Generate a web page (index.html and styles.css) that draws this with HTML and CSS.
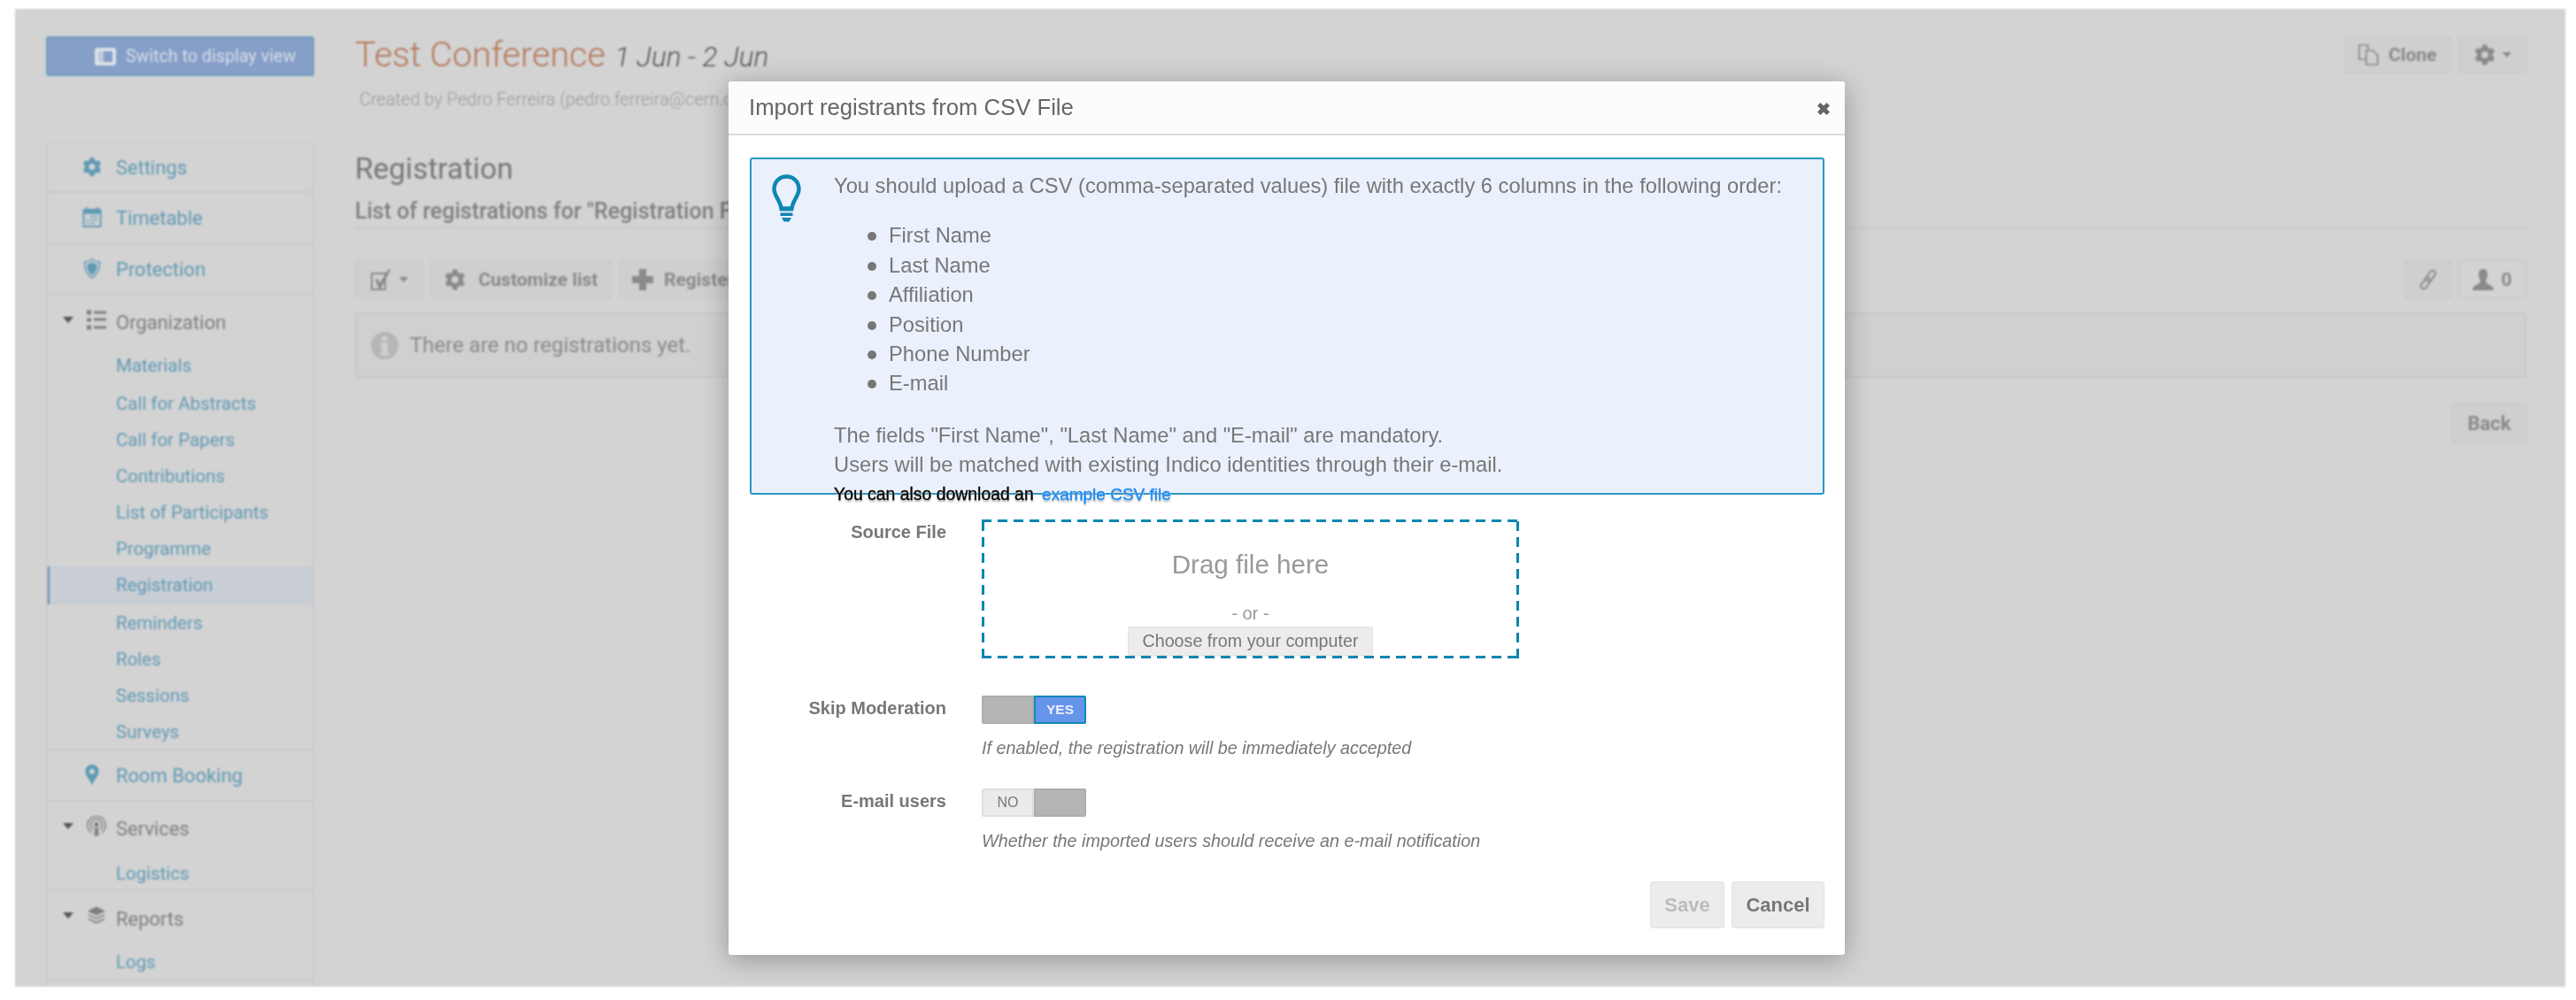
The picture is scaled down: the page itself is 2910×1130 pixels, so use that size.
FILE: index.html
```html
<!DOCTYPE html>
<html lang="en">
<head>
<meta charset="utf-8">
<title>Import registrants from CSV File</title>
<link rel="stylesheet" href="styles.css">
</head>
<body>
<svg class="defs" width="0" height="0" aria-hidden="true">
  <symbol id="cog" viewBox="0 0 24 24">
    <circle cx="12" cy="12" r="6.4" fill="none" stroke="currentColor" stroke-width="5"/>
    <g fill="currentColor">
      <rect x="9.2" y="0.6" width="5.6" height="5" rx="1"/>
      <rect x="9.2" y="0.6" width="5.6" height="5" rx="1" transform="rotate(60 12 12)"/>
      <rect x="9.2" y="0.6" width="5.6" height="5" rx="1" transform="rotate(120 12 12)"/>
      <rect x="9.2" y="0.6" width="5.6" height="5" rx="1" transform="rotate(180 12 12)"/>
      <rect x="9.2" y="0.6" width="5.6" height="5" rx="1" transform="rotate(240 12 12)"/>
      <rect x="9.2" y="0.6" width="5.6" height="5" rx="1" transform="rotate(300 12 12)"/>
    </g>
  </symbol>
  <symbol id="cal" viewBox="0 0 22 24">
    <path fill="currentColor" d="M1 2h3V0h2v2h10V0h2v2h3a1 1 0 0 1 1 1v20a1 1 0 0 1-1 1H1a1 1 0 0 1-1-1V3a1 1 0 0 1 1-1zm1 6v14h18V8z"/>
    <g fill="currentColor"><rect x="9" y="10" width="2" height="2"/><rect x="12" y="10" width="2" height="2"/><rect x="15" y="10" width="2" height="2"/><rect x="5" y="14" width="2" height="2"/><rect x="9" y="14" width="2" height="2"/><rect x="12" y="14" width="2" height="2"/><rect x="15" y="14" width="2" height="2"/><rect x="5" y="18" width="2" height="2"/><rect x="9" y="18" width="2" height="2"/><rect x="12" y="18" width="2" height="2"/></g>
  </symbol>
  <symbol id="shield" viewBox="0 0 20 24">
    <path fill="none" stroke="currentColor" stroke-width="1.6" d="M10 1c2 2 5 3 9 3 0 9-2 15-9 19C3 19 1 13 1 4c4 0 7-1 9-3z"/>
    <path fill="currentColor" d="M10 4.500c1.600 1.300 3.500 2 6 2.200-.2 6-1.600 10-6 13-4.400-3-5.800-7-6-13 2.500-.2 4.400-.9 6-2.200z"/>
  </symbol>
  <symbol id="list" viewBox="0 0 22 22">
    <path fill="currentColor" d="M0 0h5v5H0zM8 1h14v3H8zM0 9h5v4H0zM8 9h14v3H8zM0 17h5v5H0zM8 18h14v3H8z"/>
  </symbol>
  <symbol id="pin" viewBox="0 0 16 24">
    <path fill="currentColor" fill-rule="evenodd" d="M8 0a8 8 0 0 1 8 8c0 5-5 9-8 16C5 17 0 13 0 8a8 8 0 0 1 8-8zm0 5a3 3 0 1 0 0 6 3 3 0 0 0 0-6z"/>
  </symbol>
  <symbol id="cast" viewBox="0 0 24 24">
    <g fill="none" stroke="currentColor" stroke-width="1.600"><path d="M6 20a11 11 0 1 1 12 0"/><path d="M8 16a7 7 0 1 1 8 0"/></g>
    <circle cx="12" cy="10" r="3" fill="currentColor"/><path fill="currentColor" d="M10 14h4l1 10H9z"/>
  </symbol>
  <symbol id="layers" viewBox="0 0 24 24">
    <path fill="currentColor" d="M12 1l11 5.500L12 12 1 6.500zM3 10.500l9 4.500 9-4.500 2 1L12 17 1 11.500zM3 15.500l9 4.500 9-4.500 2 1L12 22 1 16.500z"/>
  </symbol>
  <symbol id="check" viewBox="0 0 24 24">
    <path fill="none" stroke="currentColor" stroke-width="2" d="M1 5h15v18H1z"/>
    <path fill="currentColor" d="M5 12l3-1 2 5L20 0l2 1-11 21h-2z"/>
  </symbol>
  <symbol id="plus" viewBox="0 0 24 24">
    <path fill="currentColor" d="M8 0h8v8h8v8h-8v8H8v-8H0V8h8z"/>
  </symbol>
  <symbol id="user" viewBox="0 0 24 24">
    <path fill="currentColor" d="M12 0c3 0 5 2 5 6s-2 6-2 8c0 3 9 4 9 10H0c0-6 9-7 9-10 0-2-2-4-2-8s2-6 5-6z"/>
  </symbol>
  <symbol id="link" viewBox="0 0 24 24">
    <g fill="none" stroke="currentColor" stroke-width="1.900" transform="rotate(-55 12 12)"><rect x="0" y="8.800" width="14" height="6.400" rx="3.200"/><rect x="10" y="8.800" width="14" height="6.400" rx="3.200"/></g>
  </symbol>
  <symbol id="clone" viewBox="0 0 24 24">
    <g fill="none" stroke="currentColor" stroke-width="1.700"><path d="M1 1h10v16H1z"/><path fill="#cfcfcf" d="M9 7h7l6 5v11H9z"/></g>
  </symbol>
  <symbol id="info" viewBox="0 0 30 30">
    <circle cx="15" cy="15" r="15" fill="currentColor"/>
    <circle cx="15" cy="7.500" r="3" fill="#d0d0d0"/>
    <path fill="#d0d0d0" d="M10 12h8v11h2v3H10v-3h2v-8h-2z"/>
  </symbol>
  <symbol id="panel" viewBox="0 0 24 20">
    <path fill="currentColor" fill-rule="evenodd" d="M3 0h18a3 3 0 0 1 3 3v14a3 3 0 0 1-3 3H3a3 3 0 0 1-3-3V3a3 3 0 0 1 3-3zm1 4v12h16V4z"/>
    <path fill="currentColor" opacity=".65" d="M4 4h6v12H4z"/>
  </symbol>
  <symbol id="bulb" viewBox="0 0 33 54">
    <path fill="none" stroke="currentColor" stroke-width="4.500" d="M16.500 2.500C8 2.500 2.500 9 2.500 16.500c0 8 7 13 8 22h12c1-9 8-14 8-22 0-7.500-5.500-14-14-14z"/>
    <path fill="currentColor" d="M9 38h15v3.500H9zM9.500 43.500h14V47h-14zM11 49h11l-2.500 4.500h-6z"/>
  </symbol>
  <symbol id="close" viewBox="0 0 16 16">
    <path fill="currentColor" d="M4 0l4 4 4-4 4 4-4 4 4 4-4 4-4-4-4 4-4-4 4-4-4-4z"/>
  </symbol>
</svg>

<div class="page">
  <aside class="side">
    <a class="switch"><svg class="i-panel"><use href="#panel"/></svg>Switch to display view</a>
    <nav class="menu">
      <div class="row r-first"><svg class="ico"><use href="#cog"/></svg>Settings</div>
      <div class="row"><svg class="ico"><use href="#cal"/></svg>Timetable</div>
      <div class="row"><svg class="ico"><use href="#shield"/></svg>Protection</div>
      <section class="group">
        <div class="ghead"><span class="caret"></span><svg class="gico"><use href="#list"/></svg>Organization</div>
        <div class="item first">Materials</div>
        <div class="item">Call for Abstracts</div>
        <div class="item">Call for Papers</div>
        <div class="item">Contributions</div>
        <div class="item">List of Participants</div>
        <div class="item">Programme</div>
        <div class="item active">Registration</div>
        <div class="item">Reminders</div>
        <div class="item">Roles</div>
        <div class="item">Sessions</div>
        <div class="item last">Surveys</div>
      </section>
      <div class="row"><svg class="ico"><use href="#pin"/></svg>Room Booking</div>
      <section class="group">
        <div class="ghead"><span class="caret"></span><svg class="gico"><use href="#cast"/></svg>Services</div>
        <div class="item g-one">Logistics</div>
      </section>
      <section class="group">
        <div class="ghead g-low"><span class="caret"></span><svg class="gico"><use href="#layers"/></svg>Reports</div>
        <div class="item g-one g-tail">Logs</div>
      </section>
      <div class="row"></div>
    </nav>
  </aside>

  <main class="main">
    <header class="head">
      <div>
        <h1 class="title">Test Conference <em class="date">1 Jun - 2 Jun</em></h1>
        <p class="created">Created by Pedro Ferreira (pedro.ferreira@cern.ch)</p>
      </div>
      <div class="actions">
        <button class="btn b-clone"><svg class="bi"><use href="#clone"/></svg>Clone</button>
        <button class="btn b-gear"><svg class="bi"><use href="#cog"/></svg><span class="mini"></span></button>
      </div>
    </header>
    <h2 class="h-reg">Registration</h2>
    <h3 class="h-sub">List of registrations for "Registration Form"</h3>
    <div class="toolbar">
      <button class="btn b-check"><svg class="bi"><use href="#check"/></svg><span class="mini"></span></button>
      <button class="btn b-cust"><svg class="bi"><use href="#cog"/></svg>Customize list</button>
      <button class="btn b-reg"><svg class="bi"><use href="#plus"/></svg>Register</button>
      <span class="spacer"></span>
      <button class="btn b-link"><svg class="bi"><use href="#link"/></svg></button>
      <button class="btn b-user"><svg class="bi"><use href="#user"/></svg>0</button>
    </div>
    <div class="notice"><svg class="i-info"><use href="#info"/></svg>There are no registrations yet.</div>
    <div class="back-row"><button class="btn b-back">Back</button></div>
  </main>
</div>

<div class="modal">
  <div class="m-head">
    <span class="m-title">Import registrants from CSV File</span>
    <svg class="m-close"><use href="#close"/></svg>
  </div>
  <div class="m-body">
    <div class="tip">
      <svg class="i-bulb"><use href="#bulb"/></svg>
      <div class="tip-text">
        <p>You should upload a CSV (comma-separated values) file with exactly 6 columns in the following order:</p>
        <ul>
          <li>First Name</li>
          <li>Last Name</li>
          <li>Affiliation</li>
          <li>Position</li>
          <li>Phone Number</li>
          <li>E-mail</li>
        </ul>
        <p>The fields "First Name", "Last Name" and "E-mail" are mandatory.<br>Users will be matched with existing Indico identities through their e-mail.</p>
        <p class="overflow">You can also download an <a>example CSV file</a></p>
      </div>
    </div>
    <div class="form">
      <label class="lab">Source File</label>
      <div class="drop">
        <div class="drag">Drag file here</div>
        <div class="or">- or -</div>
        <button class="choose">Choose from your computer</button>
      </div>
      <label class="lab l-skip">Skip Moderation</label>
      <div class="field f-skip">
        <div class="toggle"><span class="t-off"></span><span class="t-yes">YES</span></div>
        <div class="help">If enabled, the registration will be immediately accepted</div>
      </div>
      <label class="lab l-mail">E-mail users</label>
      <div class="field f-mail">
        <div class="toggle"><span class="t-no">NO</span><span class="t-off t-right"></span></div>
        <div class="help">Whether the imported users should receive an e-mail notification</div>
      </div>
    </div>
    <div class="m-foot">
      <button class="mbtn save">Save</button>
      <button class="mbtn">Cancel</button>
    </div>
  </div>
</div>
</body>
</html>
```
FILE: styles.css
```css
* { box-sizing: border-box; }
html, body { margin: 0; height: 1130px; overflow: hidden; background: #fff; }
body { font-family: "Liberation Sans", Arial, sans-serif; position: relative; }
.defs { position: absolute; }
p, h1, h2, h3, ul { margin: 0; padding: 0; }
button { font-family: inherit; margin: 0; }

.page {
  margin: 10px 12px 0 17px;
  height: 1105px;
  background: #d3d3d3;
  padding: 31px 44px 0 35px;
  display: flex;
  gap: 46px;
  overflow: hidden;
  font-family: Roboto, sans-serif;
  filter: blur(.8px);
}

/* Sidebar */
.side { width: 303px; flex: none; }
.switch {
  display: flex; align-items: center;
  height: 45px; padding-left: 53px;
  background: #859fc9; border: 2px solid #6f9fbb; border-radius: 3px;
  color: #d9dee7; font-size: 19.7px; white-space: nowrap;
}
.i-panel { width: 24px; height: 20px; margin-right: 11px; color: #dde1e8; }
.menu {
  margin-top: 74px; border: 2px solid #cacaca; border-top-width: 1px; border-bottom: 0; border-radius: 3px;
  color: #5f9ab5; font-size: 22px;
}
.row {
  display: flex; align-items: center;
  height: 58px; padding: 1px 0 0 77px; position: relative;
  border-bottom: 2px solid #cacaca;
}
.r-first { height: 57px; }
.ico { position: absolute; left: 39px; top: 16px; width: 22px; height: 23px; }
.group { border-bottom: 2px solid #cacaca; }
.ghead {
  display: flex; align-items: center; height: 58px; padding: 2px 0 0 77px;
  position: relative; color: #7f7f7f;
}
.g-low { padding-top: 4px; }
.caret {
  position: absolute; left: 17px; top: 24px;
  border: 6px solid transparent; border-top: 7px solid #555; border-bottom: 0;
}
.gico { position: absolute; left: 44px; top: 16px; width: 22px; height: 23px; }
.item {
  height: 41px; line-height: 42px; padding-left: 77px; font-size: 20.5px;
}
.item.first { height: 43px; }
.item.last { height: 40px; }
.item.active {
  height: 43px; line-height: 43px; padding-left: 75px;
  background: #c9ced5; border-left: 2px solid #5b8fb3;
}
.item.g-one { line-height: 46px; }
.item.g-tail { line-height: 44px; }

/* Main */
.main { flex: 1; min-width: 0; }
.head { display: flex; justify-content: space-between; height: 129px; }
.title { font-weight: 300; font-size: 39.5px; line-height: 42px; color: #b4785a; white-space: nowrap; }
.date { font-size: 31.5px; color: #555; font-weight: 300; margin-left: 1px; }
.created { margin: 14px 0 0 5px; font-size: 20px; line-height: 24px; color: #999; font-weight: 300; white-space: nowrap; }
.actions { display: flex; gap: 8px; height: 42px; }
.btn {
  display: inline-flex; align-items: center; justify-content: center;
  border: 1px solid #c8c8c8; border-radius: 2px; background: #cfcfcf;
  color: #8a8a8a; font-weight: bold; font-size: 21px; padding: 0; white-space: nowrap;
}
.bi { width: 24px; height: 24px; flex: none; }
.b-clone { width: 121px; gap: 10px; }
.b-gear { width: 77px; gap: 8px; }
.mini { border: 5px solid transparent; border-top: 6px solid #8a8a8a; border-bottom: 0; }
.h-reg { font-weight: 400; font-size: 33.4px; line-height: 40px; color: #777; padding-top: 1px; }
.h-sub {
  margin-top: 13px; height: 34px; line-height: 30px;
  font-weight: 500; font-size: 25px; color: #808080;
  border-bottom: 2px solid #cacaca; white-space: nowrap;
}
.toolbar { display: flex; gap: 8px; height: 43px; margin-top: 36px; }
.spacer { flex: 1; }
.b-check { width: 77px; gap: 8px; }
.b-cust { width: 205px; gap: 15px; }
.b-reg { width: 180px; gap: 12px; justify-content: flex-start; padding-left: 14px; }
.b-link { width: 52px; }
.b-user { width: 77px; gap: 8px; background: #d3d3d3; }
.notice {
  margin-top: 16px; height: 74px; display: flex; align-items: center; padding-left: 16px;
  border: 2px solid #c8c8c8; border-radius: 3px; background: #d0d0d0;
  font-size: 24px; color: #8a8a8a; font-weight: 400;
}
.i-info { width: 31px; height: 31px; margin-right: 13px; color: #b6b6b6; }
.back-row { display: flex; justify-content: flex-end; margin-top: 28px; }
.b-back { width: 84px; height: 46px; font-size: 22px; }

/* Modal */
.modal {
  position: absolute; left: 823px; top: 92px; width: 1261px; height: 987px;
  background: #fff; border-radius: 3px;
  box-shadow: 0 5px 30px rgba(0, 0, 0, .3);
  color: #777;
  filter: blur(.5px);
}
.m-head {
  height: 61px; background: #fcfcfc; border-bottom: 2px solid #dcdcdc;
  border-radius: 3px 3px 0 0; display: flex; align-items: center; justify-content: space-between;
  padding: 0 17px 0 23px;
}
.m-title { font-size: 25.7px; color: #666; }
.m-close { width: 14px; height: 14px; color: #666; margin-top: 2px; }
.m-body { padding: 25px 23px 0 24px; }
.tip {
  height: 381px; border: 2px solid #2a97c2; border-radius: 3px; background: #eaf1fc;
  display: flex; padding: 14px 0 0 23px; font-size: 23.72px; line-height: 33.4px;
}
.i-bulb { width: 33px; height: 54px; flex: none; color: #0f86b3; margin: 3px 37px 0 0; }
.tip-text { min-width: 0; white-space: nowrap; }
.tip ul { list-style: none; margin: 23px 0 25px 62px; }
.tip li { position: relative; }
.tip li::before {
  content: ""; position: absolute; left: -24px; top: 12px;
  width: 10px; height: 10px; border-radius: 50%; background: #777;
}
.overflow {
  font-size: 19.4px; color: #000; margin-top: -1px;
  -webkit-text-stroke: .35px currentColor;
  text-shadow: 0 0 2px #fff, 0 0 1px #fff, 0 2px 2px #999;
}
.overflow a { color: #1587f5; font-size: 19px; margin-left: 4px; }
.form {
  display: grid; grid-template-columns: 222px 1fr; column-gap: 40px;
  margin-top: 28px;
}
.lab { text-align: right; font-weight: bold; font-size: 20px; line-height: 28px; color: #777; }
.drop {
  width: 607px; height: 157px; text-align: center; padding-top: 30px;
  --dash: #0a85b0;
  background:
    repeating-linear-gradient(90deg, var(--dash) 0 11px, transparent 11px 18px) left top / 100% 3px no-repeat,
    repeating-linear-gradient(90deg, var(--dash) 0 11px, transparent 11px 18px) left bottom / 100% 3px no-repeat,
    repeating-linear-gradient(0deg, var(--dash) 0 11px, transparent 11px 18px) left top / 3px 100% no-repeat,
    repeating-linear-gradient(0deg, var(--dash) 0 11px, transparent 11px 18px) right top / 3px 100% no-repeat;
  display: flex; flex-direction: column; align-items: center;
}
.drag { font-size: 29.6px; line-height: 42px; color: #999; }
.or { margin-top: 20px; font-size: 20px; line-height: 28px; color: #999; }
.choose {
  width: 277px; height: 33px; line-height: 31px; padding: 0; margin-top: 1px;
  border: 1px solid #e2e2e2; border-radius: 2px; background: #ececec; color: #777; font-size: 19.7px;
}
.l-skip, .f-skip { margin-top: 42px; }
.l-mail, .f-mail { margin-top: 32px; }
.toggle { display: flex; width: 118px; height: 32px; font-size: 15.5px; font-weight: bold; }
.toggle span { display: block; width: 59px; text-align: center; line-height: 28px; }
.t-off { background: #b5b5b5; border: 2px solid #adadad; border-radius: 2px 0 0 2px; }
.t-right { border-radius: 0 2px 2px 0; }
.t-yes { background: #6495e8; border: 2px solid #1187b8; border-radius: 0 2px 2px 0; color: #eef; }
.t-no { background: #ebebeb; border: 2px solid #dedede; border-radius: 2px 0 0 2px; color: #777; font-weight: 400; font-size: 16px; }
.help { margin-top: 13px; font-style: italic; font-size: 19.75px; line-height: 28px; color: #777; }
.m-foot { display: flex; justify-content: flex-end; gap: 8px; margin-top: 32px; }
.mbtn {
  height: 53px; width: 105px; border: 1px solid #e2e2e2; border-radius: 3px; background: #ececec;
  font-size: 22px; font-weight: bold; color: #777; padding: 0;
}
.save { width: 84px; color: #bcbcbc; }
```
